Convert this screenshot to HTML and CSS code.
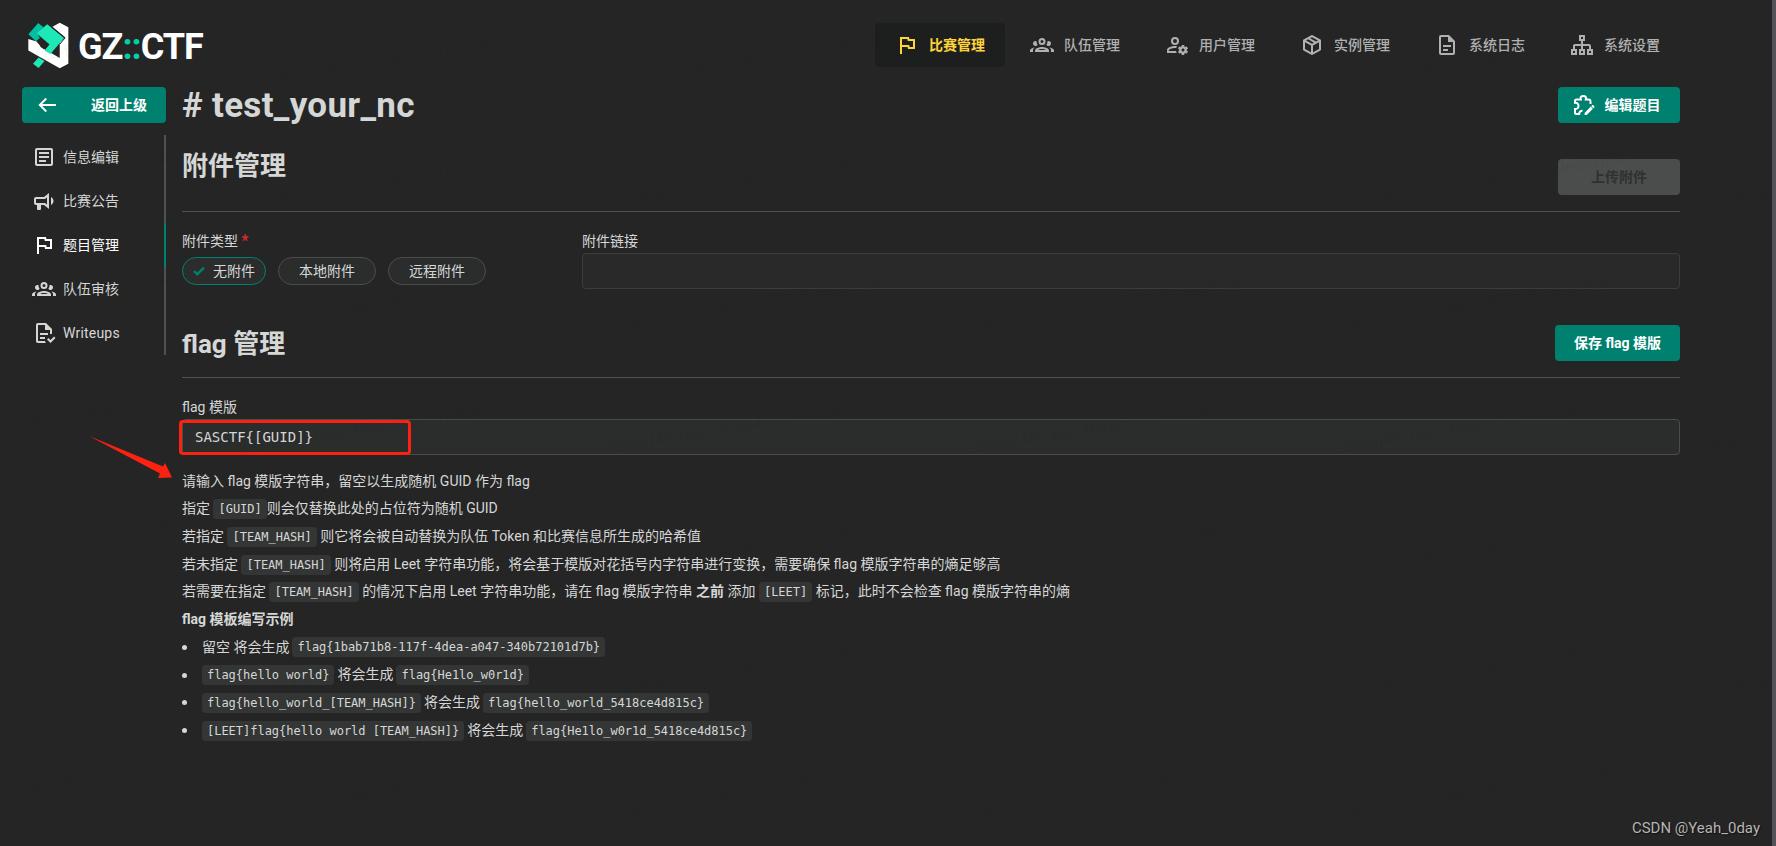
FILE: index.html
```
<!DOCTYPE html>
<html lang="zh-CN">
<head>
    <meta charset="UTF-8">
    <meta name="viewport" content="width=device-width, initial-scale=1.0">
    <title>GZ::CTF</title>
    <link rel="stylesheet" href="styles.css">
</head>
<body>
    <header class="header">
        <a class="logo">
            <svg class="logo-icon" viewBox="84 64 124 142">
                <path fill="#fff" d="M85 115L110 123L124 140L180 173V126L197 111L158 78L180 66L206 80V190L180 204L85 150Z"/>
                <path fill="#00bfa5" d="M115 67L131 80L112 98L120 112L108 122L85 101Z"/>
                <path fill="#1de9b6" d="M142 71L193 112L152 161L134 150L149 132L110 98Z"/>
                <path fill="#1de9b6" d="M116 171L134 182L116 203L99 190Z"/>
                <path fill="#252525" d="M128 117L146 130L133 147L121 138L131 127L121 130L113 125Z"/>
                <path fill="none" stroke="#252525" stroke-width="3" d="M158 82L196 112L180 131"/>
            </svg>
            <span class="logo-text">GZ<i>::</i>CTF</span>
        </a>
        <nav class="nav">
            <a class="nav-item active">
                <svg class="icon" viewBox="0 0 24 24"><path d="M12.36 6l.4 2H18v6h-3.36l-.4-2H7V6h5.36M14 4H5v17h2v-7h5.6l.4 2h7V6h-5.6L14 4z"/></svg>
                <span>比赛管理</span>
            </a>
            <a class="nav-item">
                <svg class="icon" viewBox="0 0 24 24"><path d="M12,5A3.5,3.5 0 0,0 8.5,8.5A3.5,3.5 0 0,0 12,12A3.5,3.5 0 0,0 15.5,8.5A3.5,3.5 0 0,0 12,5M12,7A1.5,1.5 0 0,1 13.5,8.5A1.5,1.5 0 0,1 12,10A1.5,1.5 0 0,1 10.5,8.5A1.5,1.5 0 0,1 12,7M5.5,8A2.5,2.5 0 0,0 3,10.5C3,11.44 3.53,12.25 4.29,12.68C4.65,12.88 5.06,13 5.5,13C5.94,13 6.35,12.88 6.71,12.68C7.08,12.47 7.39,12.17 7.62,11.81C6.89,10.86 6.5,9.7 6.5,8.5C6.5,8.41 6.5,8.31 6.5,8.22C6.2,8.08 5.86,8 5.5,8M18.5,8C18.14,8 17.8,8.08 17.5,8.22C17.5,8.31 17.5,8.41 17.5,8.5C17.5,9.7 17.11,10.86 16.38,11.81C16.5,12 16.63,12.15 16.78,12.3C16.94,12.45 17.1,12.58 17.29,12.68C17.65,12.88 18.06,13 18.5,13C18.94,13 19.35,12.88 19.71,12.68C20.47,12.25 21,11.44 21,10.5A2.5,2.5 0 0,0 18.5,8M12,14C9.66,14 5,15.17 5,17.5V19H19V17.5C19,15.17 14.34,14 12,14M4.71,14.55C2.78,14.78 0,15.76 0,17.5V19H3V17.07C3,16.06 3.69,15.22 4.71,14.55M19.29,14.55C20.31,15.22 21,16.06 21,17.07V19H24V17.5C24,15.76 21.22,14.78 19.29,14.55M12,16C13.53,16 15.24,16.5 16.23,17H7.77C8.76,16.5 10.47,16 12,16Z"/></svg>
                <span>队伍管理</span>
            </a>
            <a class="nav-item">
                <svg class="icon" viewBox="0 0 24 24"><path d="M10 4A4 4 0 0 0 6 8A4 4 0 0 0 10 12A4 4 0 0 0 14 8A4 4 0 0 0 10 4M10 6A2 2 0 0 1 12 8A2 2 0 0 1 10 10A2 2 0 0 1 8 8A2 2 0 0 1 10 6M17 12C16.84 12 16.76 12.08 16.76 12.24L16.5 13.5C16.28 13.68 15.96 13.84 15.72 14L14.44 13.5C14.36 13.5 14.2 13.5 14.12 13.6L13.16 15.36C13.08 15.44 13.08 15.6 13.24 15.68L14.28 16.5V17.5L13.24 18.32C13.16 18.4 13.08 18.56 13.16 18.64L14.12 20.4C14.2 20.5 14.36 20.5 14.44 20.5L15.72 20C15.96 20.16 16.28 20.32 16.5 20.5L16.76 21.76C16.76 21.92 16.84 22 17 22H19C19.08 22 19.24 21.92 19.24 21.76L19.4 20.5C19.72 20.32 20.04 20.16 20.28 20L21.5 20.5C21.64 20.5 21.8 20.5 21.8 20.4L22.84 18.64C22.92 18.56 22.84 18.4 22.76 18.32L21.72 17.5V16.5L22.76 15.68C22.84 15.6 22.92 15.44 22.84 15.36L21.8 13.6C21.8 13.5 21.64 13.5 21.5 13.5L20.28 14C20.04 13.84 19.72 13.68 19.4 13.5L19.24 12.24C19.24 12.08 19.08 12 19 12H17M10 13C7.33 13 2 14.33 2 17V20H11.67C11.39 19.41 11.19 18.77 11.09 18.1H3.9V17C3.9 16.36 7.03 14.9 10 14.9C10.43 14.9 10.87 14.94 11.3 15C11.5 14.36 11.77 13.76 12.12 13.21C11.34 13.08 10.6 13 10 13M18.04 15.5C18.84 15.5 19.54 16.2 19.54 17.04C19.54 17.84 18.84 18.54 18.04 18.54C17.2 18.54 16.5 17.84 16.5 17.04C16.5 16.2 17.2 15.5 18.04 15.5Z"/></svg>
                <span>用户管理</span>
            </a>
            <a class="nav-item">
                <svg class="icon" viewBox="0 0 24 24"><path d="M21,16.5C21,16.88 20.79,17.21 20.47,17.38L12.57,21.82C12.41,21.94 12.21,22 12,22C11.79,22 11.59,21.94 11.43,21.82L3.53,17.38C3.21,17.21 3,16.88 3,16.5V7.5C3,7.12 3.21,6.79 3.53,6.62L11.43,2.18C11.59,2.06 11.79,2 12,2C12.21,2 12.41,2.06 12.57,2.18L20.47,6.62C20.79,6.79 21,7.12 21,7.5V16.5M12,4.15L10.11,5.22L16,8.61L17.96,7.5L12,4.15M6.04,7.5L12,10.85L13.96,9.75L8.08,6.35L6.04,7.5M5,15.91L11,19.29V12.58L5,9.21V15.91M19,15.91V9.21L13,12.58V19.29L19,15.91Z"/></svg>
                <span>实例管理</span>
            </a>
            <a class="nav-item">
                <svg class="icon" viewBox="0 0 24 24"><path d="M6,2A2,2 0 0,0 4,4V20A2,2 0 0,0 6,22H18A2,2 0 0,0 20,20V8L14,2H6M6,4H13V9H18V20H6V4M8,12V14H16V12H8M8,16V18H13V16H8Z"/></svg>
                <span>系统日志</span>
            </a>
            <a class="nav-item">
                <svg class="icon" viewBox="0 0 24 24"><path d="M9,2V8H11V11H5C3.89,11 3,11.89 3,13V16H1V22H7V16H5V13H11V16H9V22H15V16H13V13H19V16H17V22H23V16H21V13C21,11.89 20.11,11 19,11H13V8H15V2H9M11,4H13V6H11V4M3,18H5V20H3V18M11,18H13V20H11V18M19,18H21V20H19V18Z"/></svg>
                <span>系统设置</span>
            </a>
        </nav>
    </header>

    <div class="layout">
        <aside class="sidebar">
            <button class="btn btn-back">
                <svg class="icon" viewBox="0 0 24 24"><path d="M21,11V13H7.2L12,17.8L10.6,19.2L3.4,12L10.6,4.8L12,6.2L7.2,11H21Z"/></svg>
                <span>返回上级</span>
            </button>
            <nav class="tabs">
                <a class="tab">
                    <svg class="icon" viewBox="0 0 24 24"><path d="M5,3C3.89,3 3,3.89 3,5V19C3,20.11 3.89,21 5,21H19C20.11,21 21,20.11 21,19V5C21,3.89 20.11,3 19,3H5M5,5H19V19H5V5M7,7V9H17V7H7M7,11V13H17V11H7M7,15V17H14V15H7Z"/></svg>
                    <span>信息编辑</span>
                </a>
                <a class="tab">
                    <svg class="icon" viewBox="0 0 24 24"><path d="M12,8H4A2,2 0 0,0 2,10V14A2,2 0 0,0 4,16H5V20A1,1 0 0,0 6,21H8A1,1 0 0,0 9,20V16H12L17,20V4L12,8M15,15.6L13,14H4V10H13L15,8.4V15.6M21.5,12C21.5,13.71 20.54,15.26 19,16V8C20.53,8.75 21.5,10.3 21.5,12Z"/></svg>
                    <span>比赛公告</span>
                </a>
                <a class="tab active">
                    <svg class="icon" viewBox="0 0 24 24"><path d="M12.36 6l.4 2H18v6h-3.36l-.4-2H7V6h5.36M14 4H5v17h2v-7h5.6l.4 2h7V6h-5.6L14 4z"/></svg>
                    <span>题目管理</span>
                </a>
                <a class="tab">
                    <svg class="icon" viewBox="0 0 24 24"><path d="M12,5A3.5,3.5 0 0,0 8.5,8.5A3.5,3.5 0 0,0 12,12A3.5,3.5 0 0,0 15.5,8.5A3.5,3.5 0 0,0 12,5M12,7A1.5,1.5 0 0,1 13.5,8.5A1.5,1.5 0 0,1 12,10A1.5,1.5 0 0,1 10.5,8.5A1.5,1.5 0 0,1 12,7M5.5,8A2.5,2.5 0 0,0 3,10.5C3,11.44 3.53,12.25 4.29,12.68C4.65,12.88 5.06,13 5.5,13C5.94,13 6.35,12.88 6.71,12.68C7.08,12.47 7.39,12.17 7.62,11.81C6.89,10.86 6.5,9.7 6.5,8.5C6.5,8.41 6.5,8.31 6.5,8.22C6.2,8.08 5.86,8 5.5,8M18.5,8C18.14,8 17.8,8.08 17.5,8.22C17.5,8.31 17.5,8.41 17.5,8.5C17.5,9.7 17.11,10.86 16.38,11.81C16.5,12 16.63,12.15 16.78,12.3C16.94,12.45 17.1,12.58 17.29,12.68C17.65,12.88 18.06,13 18.5,13C18.94,13 19.35,12.88 19.71,12.68C20.47,12.25 21,11.44 21,10.5A2.5,2.5 0 0,0 18.5,8M12,14C9.66,14 5,15.17 5,17.5V19H19V17.5C19,15.17 14.34,14 12,14M4.71,14.55C2.78,14.78 0,15.76 0,17.5V19H3V17.07C3,16.06 3.69,15.22 4.71,14.55M19.29,14.55C20.31,15.22 21,16.06 21,17.07V19H24V17.5C24,15.76 21.22,14.78 19.29,14.55M12,16C13.53,16 15.24,16.5 16.23,17H7.77C8.76,16.5 10.47,16 12,16Z"/></svg>
                    <span>队伍审核</span>
                </a>
                <a class="tab">
                    <svg class="icon" viewBox="0 0 24 24"><path d="M23.5 17L18.5 22L15 18.5L16.5 17L18.5 19L22 15.5L23.5 17M6 2C4.89 2 4 2.89 4 4V20C4 21.11 4.89 22 6 22H13.81C13.45 21.38 13.2 20.7 13.08 20H6V4H13V9H18V13.08C18.33 13.03 18.67 13 19 13C19.34 13 19.67 13.03 20 13.08V8L14 2M8 12V14H16V12M8 16V18H13V16Z"/></svg>
                    <span class="writeups">Writeups</span>
                </a>
            </nav>
        </aside>

        <main class="main">
            <div class="title-row">
                <h1># test_your_nc</h1>
                <button class="btn btn-edit">
                    <svg class="icon" viewBox="0 0 24 24">
                        <path class="line" d="M19.5 11V8.5Q19.5 6.5 17.5 6.5H14.8C15.6 3.9 14.2 3 12.3 3S9 3.9 9.8 6.5H5.5Q4 6.5 4 8V9.8C6.5 9.5 7.5 11.2 7.5 12.9S6.5 16.2 4 16V19.5Q4 21 5.5 21H8.2C8.3 18.7 9.5 17.7 11.5 17.8"/>
                        <path d="M21.3 12.1Q21.7 11.7 22.1 12.1L23.4 13.4Q23.8 13.8 23.4 14.2L22.4 15.2L20.3 13.1ZM19.8 13.6L21.9 15.7L15.7 22H13.6V19.9Z"/>
                    </svg>
                    <span>编辑题目</span>
                </button>
            </div>

            <section class="attachment">
                <div class="section-head">
                    <h2>附件管理</h2>
                    <button class="btn btn-upload" disabled>上传附件</button>
                </div>
                <div class="form-row">
                    <div class="field-type">
                        <label>附件类型 <em>*</em></label>
                        <div class="chips">
                            <span class="chip checked">
                                <svg viewBox="0 0 12 10"><path d="M1 5L4.3 8.2L11 1.5"/></svg>无附件
                            </span>
                            <span class="chip">本地附件</span>
                            <span class="chip">远程附件</span>
                        </div>
                    </div>
                    <div class="field-link">
                        <label for="link">附件链接</label>
                        <input type="text" id="link" disabled>
                    </div>
                </div>
            </section>

            <section class="flags">
                <div class="section-head">
                    <h2>flag 管理</h2>
                    <button class="btn btn-save">保存 flag 模版</button>
                </div>
                <label for="template">flag 模版</label>
                <div class="template">
                    <input type="text" id="template" value="SASCTF{[GUID]}">
                    <div class="mark"></div>
                    <svg class="mark-arrow" viewBox="0 0 84 44"><path d="M0 0L74 30.5L76 27L83 41.5L69 42L71 37.5Z"/></svg>
                </div>

                <div class="help">
                    <p>请输入 flag 模版字符串，留空以生成随机 GUID 作为 flag</p>
                    <p>指定 <code>[GUID]</code>则会仅替换此处的占位符为随机 GUID</p>
                    <p>若指定 <code>[TEAM_HASH]</code> 则它将会被自动替换为队伍 Token 和比赛信息所生成的哈希值</p>
                    <p>若未指定 <code>[TEAM_HASH]</code> 则将启用 Leet 字符串功能，将会基于模版对花括号内字符串进行变换，需要确保 flag 模版字符串的熵足够高</p>
                    <p>若需要在指定 <code>[TEAM_HASH]</code> 的情况下启用 Leet 字符串功能，请在 flag 模版字符串 <b>之前</b> 添加 <code>[LEET]</code> 标记，此时不会检查 flag 模版字符串的熵</p>
                    <p><b>flag 模板编写示例</b></p>
                    <ul>
                        <li>留空 将会生成 <code>flag{1bab71b8-117f-4dea-a047-340b72101d7b}</code></li>
                        <li><code>flag{hello world}</code> 将会生成 <code>flag{He1lo_w0r1d}</code></li>
                        <li><code>flag{hello_world_[TEAM_HASH]}</code> 将会生成 <code>flag{hello_world_5418ce4d815c}</code></li>
                        <li><code>[LEET]flag{hello world [TEAM_HASH]}</code> 将会生成 <code>flag{He1lo_w0r1d_5418ce4d815c}</code></li>
                    </ul>
                </div>
            </section>
        </main>
    </div>

    <svg class="watermark" width="1776" height="846" aria-hidden="true">
        <defs>
            <pattern id="wm" x="240" y="264" width="365" height="122" patternUnits="userSpaceOnUse">
                <text x="0" y="68" transform="rotate(-9.3 0 68)">398a9f45-1ea2-4628-8f2d-f9790eb52b9a</text>
            </pattern>
        </defs>
        <rect width="1776" height="846" fill="url(#wm)"/>
    </svg>
    <div class="scrollbar"></div>
    <div class="credit">CSDN @Yeah_0day</div>
</body>
</html>
```
FILE: styles.css
```
* {
    box-sizing: border-box;
}
body {
    margin: 0;
    height: 846px;
    overflow: hidden;
    position: relative;
    background-color: #252525;
    color: #d5d7d7;
    font-family: Roboto, "Noto Sans CJK SC", sans-serif;
    font-size: 14px;
    line-height: 22px;
}
h1, h2, p, ul {
    margin: 0;
    padding: 0;
}
.icon {
    width: 24px;
    height: 24px;
    flex: none;
    fill: currentColor;
}
.icon .line {
    fill: none;
    stroke: currentColor;
    stroke-width: 2;
}

/* header */
.header {
    display: flex;
    justify-content: space-between;
    align-items: flex-start;
    height: 87px;
    padding: 21px 96px 0 28px;
}
.logo {
    display: flex;
    align-items: center;
    gap: 9px;
    height: 48px;
}
.logo-icon {
    width: 41px;
    height: 47px;
}
.logo-text {
    padding-top: 3px;
    color: #fff;
    font-size: 36px;
    font-weight: bold;
    letter-spacing: -1px;
}
.logo-text i {
    font-style: normal;
    color: #00d1a8;
}
.nav {
    display: flex;
    gap: 5px;
    padding-top: 2px;
}
.nav-item {
    display: flex;
    align-items: center;
    justify-content: center;
    gap: 10px;
    width: 130px;
    height: 44px;
    border-radius: 4px;
    color: #b0b1b1;
    font-weight: 500;
}
.nav-item.active {
    background-color: #1d1f1e;
    color: #ffd43b;
    font-weight: bold;
}

/* buttons */
.btn {
    display: flex;
    align-items: center;
    justify-content: center;
    height: 36px;
    padding: 0;
    border: none;
    border-radius: 4px;
    background-color: #00806f;
    color: #fff;
    font: bold 14px/22px Roboto, "Noto Sans CJK SC", sans-serif;
    cursor: pointer;
}
.btn-back {
    width: 144px;
    justify-content: space-between;
    padding: 0 19px 0 13px;
}
.btn-edit {
    width: 122px;
    gap: 10px;
    padding-right: 7px;
}
.btn-upload {
    width: 122px;
    align-self: flex-end;
    background-color: #4b4d4c;
    color: #2f3131;
}
.btn-save {
    width: 125px;
}

/* sidebar */
.layout {
    display: flex;
    gap: 16px;
    padding: 0 96px 0 22px;
}
.sidebar {
    width: 144px;
    flex: none;
}
.tabs {
    margin-top: 12px;
}
.tab {
    display: flex;
    align-items: center;
    gap: 7px;
    height: 44px;
    padding-left: 10px;
    border-right: 2px solid #505252;
}
.tab.active {
    border-right-color: #00806f;
    color: #fff;
}
.writeups {
    letter-spacing: 0.2px;
}

/* main */
.main {
    flex: 1;
}
.title-row {
    display: flex;
    align-items: center;
    justify-content: space-between;
    height: 36px;
}
h1 {
    padding-top: 2px;
    font-size: 35px;
    line-height: 36px;
    letter-spacing: 0.3px;
}
h2 {
    padding-top: 1px;
    font-size: 26px;
    line-height: 36px;
}
.section-head {
    display: flex;
    justify-content: space-between;
    border-bottom: 1px solid #505252;
}
.attachment .section-head {
    height: 89px;
    padding: 24px 0 16px;
}
.flags .section-head {
    height: 53px;
    margin: 36px 0 18px;
}
.form-row {
    display: grid;
    grid-template-columns: 400px 1fr;
    padding-top: 18px;
}
label {
    display: block;
    height: 23px;
}
label em {
    color: #e03131;
    font-size: 16px;
    font-style: normal;
}
.chips {
    display: flex;
    gap: 12px;
    padding-top: 4px;
}
.chip {
    display: flex;
    align-items: center;
    justify-content: center;
    width: 98px;
    height: 28px;
    border: 1px solid #4a4d4c;
    border-radius: 14px;
    background-color: #2b2d2c;
}
.chip.checked {
    width: 84px;
    gap: 8px;
    border-color: #00806f;
}
.chip svg {
    width: 12px;
    height: 10px;
    fill: none;
    stroke: #00806f;
    stroke-width: 2.4;
}
input {
    display: block;
    width: 100%;
    height: 36px;
    padding: 0 12px;
    border: 1px solid #4a4d4c;
    border-radius: 4px;
    background-color: #2b2d2c;
    color: #d5d7d7;
    font: 14px "DejaVu Sans Mono", monospace;
}
input:disabled {
    border-color: #3b3d3c;
    background-color: #292929;
}
.template {
    position: relative;
}
.mark {
    position: absolute;
    left: -3px;
    top: 1px;
    width: 232px;
    height: 35px;
    border: 3px solid #fc2212;
    border-radius: 4px;
}
.mark-arrow {
    position: absolute;
    left: -93px;
    top: 17px;
    width: 84px;
    height: 44px;
    fill: #fc2212;
}

/* template help */
.help {
    padding-top: 12.5px;
}
.help p, .help li {
    height: 27.7px;
    line-height: 27.7px;
    white-space: nowrap;
}
.help ul {
    list-style: none;
}
.help li {
    display: flex;
    align-items: center;
    gap: 3px;
}
.help li::before {
    content: "";
    width: 5px;
    height: 5px;
    margin-right: 12px;
    border-radius: 50%;
    background-color: #d5d7d7;
}
code {
    display: inline-block;
    height: 20px;
    padding: 0 5px;
    border-radius: 4px;
    background-color: #343635;
    font: 12px/20px "DejaVu Sans Mono", monospace;
    letter-spacing: -0.02px;
}

/* overlays */
.watermark {
    position: absolute;
    left: 0;
    top: 0;
    pointer-events: none;
}
.watermark text {
    font-size: 16px;
    letter-spacing: 0.1px;
    fill: rgba(0, 0, 0, 0.04);
}
.scrollbar {
    position: absolute;
    right: 0;
    top: 0;
    width: 4px;
    height: 846px;
    background-color: #53545a;
}
.credit {
    position: absolute;
    right: 16px;
    bottom: 7px;
    color: #b4b4b4;
    font-size: 15px;
    text-shadow: 1px 1px 1px #111;
}
```
